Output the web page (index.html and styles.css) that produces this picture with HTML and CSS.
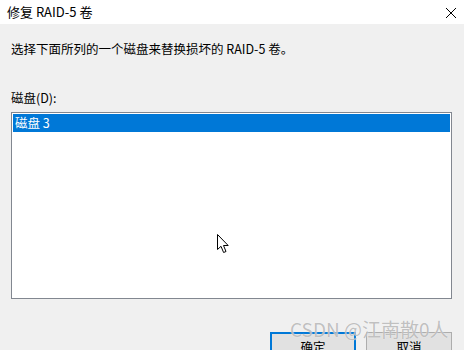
FILE: index.html
```html
<!DOCTYPE html>
<html lang="zh-CN">
<head>
    <meta charset="UTF-8">
    <title>修复 RAID-5 卷</title>
    <link rel="stylesheet" href="styles.css">
</head>
<body>

<div class="dialog">
    <div class="titlebar">
        <span class="title">修复 RAID-5 卷</span>
        <svg class="close" width="12" height="12" viewBox="0 0 12 12">
            <path d="M1 1 L11 11 M11 1 L1 11" stroke="#000" stroke-width="1" fill="none"/>
        </svg>
    </div>

    <div class="content">
        <div class="prompt">选择下面所列的一个磁盘来替换损坏的 RAID-5 卷。</div>
        <div class="label">磁盘(D):</div>
        <div class="listbox">
            <div class="item selected">磁盘 3</div>
        </div>
        <div class="buttons">
            <button class="btn default">确定</button>
            <button class="btn">取消</button>
        </div>
    </div>

    <svg class="cursor" width="14" height="20" viewBox="0 0 14 20">
        <path d="M0.5 0.5 L0.5 15.5 L4 12.3 L6.6 18.5 L9 17.5 L6.5 11.5 L11.2 11.5 Z" fill="#fff" stroke="#000" stroke-width="1" stroke-linejoin="miter"/>
    </svg>

    <div class="watermark">CSDN @江南散0人</div>
</div>

</body>
</html>
```

FILE: styles.css
```css
body {
    margin: 0;
    padding: 0;
    background-color: #f0f0f0;
    font-family: "Noto Sans CJK SC", "Noto Sans", sans-serif;
    font-size: 12.5px;
    color: #000;
}
.dialog {
    position: relative;
    width: 464px;
    height: 350px;
    overflow: hidden;
}
.titlebar {
    height: 24px;
    background-color: #fff;
    display: flex;
    align-items: center;
    justify-content: space-between;
    padding: 0 7px 0 7px;
}
.title {
    line-height: 16px;
    font-size: 13px;
}
.close {
    margin-top: 2px;
}
.content {
    padding: 0 12px 0 11px;
}
.prompt {
    margin-top: 17px;
    line-height: 16px;
}
.label {
    margin-top: 33px;
    line-height: 16px;
}
.listbox {
    margin-top: 6px;
    height: 183px;
    border: 1px solid #828790;
    background-color: #fff;
    padding: 1px;
}
.item {
    height: 18px;
    line-height: 18px;
    padding-left: 2px;
}
.item.selected {
    background-color: #0078d7;
    color: #fff;
}
.buttons {
    display: flex;
    justify-content: flex-end;
    gap: 10px;
    margin-top: 33px;
}
.btn {
    width: 86px;
    height: 28px;
    background-color: #e1e1e1;
    border: 1px solid #adadad;
    font-family: inherit;
    font-size: 12.5px;
    padding: 0;
    color: #000;
}
.btn.default {
    border: 2px solid #0078d7;
}
.cursor {
    position: absolute;
    left: 217px;
    top: 234px;
}
.watermark {
    position: absolute;
    left: 290px;
    top: 317px;
    font-size: 19px;
    line-height: 24px;
    color: rgba(140, 140, 140, 0.55);
    text-shadow: 0 0 1px #fff;
    white-space: nowrap;
}
```
